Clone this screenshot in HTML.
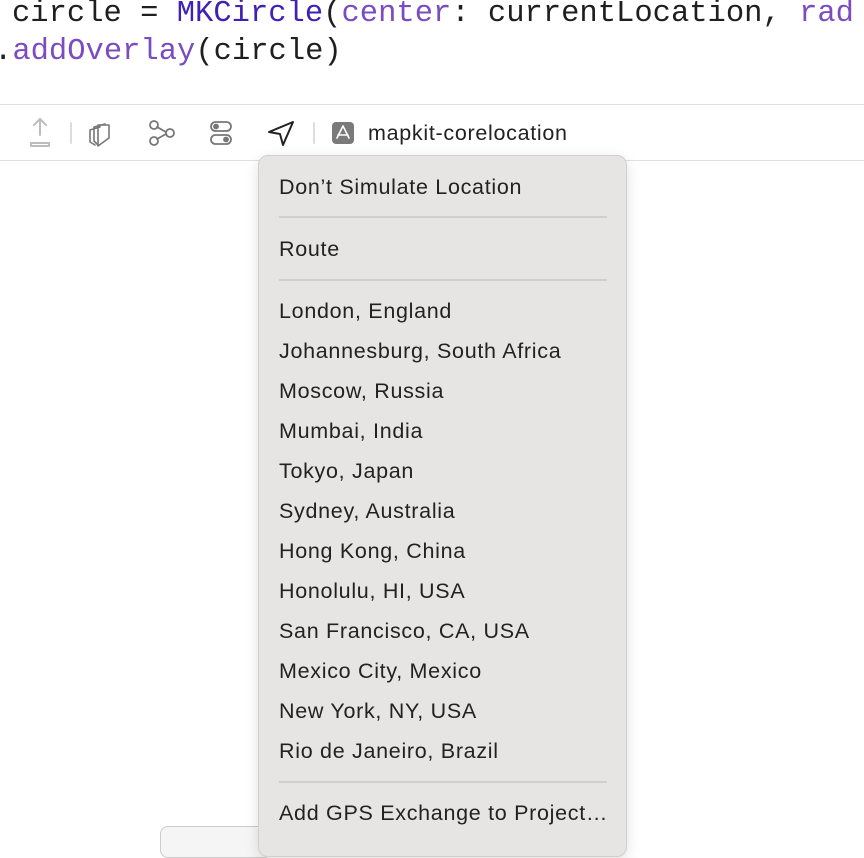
<!DOCTYPE html><html><head><style>
body{margin:0;width:864px;height:840px;overflow:hidden;background:#fff;position:relative;font-family:"Liberation Sans",sans-serif}
.code{position:absolute;left:0;font-family:"Liberation Mono",monospace;font-size:30.5px;color:#1f1f1f;white-space:pre;line-height:38px}
.k{color:#3f22b4}.p{color:#7b4cc0}
.hl{position:absolute;left:0;width:864px;height:1px;background:#e0e0e0}
.menu{position:absolute;left:258px;top:155px;width:367px;height:700px;background:#e6e5e4;border:1px solid #cfcfcf;border-radius:10px;box-shadow:0 4px 14px rgba(0,0,0,.12)}
.it{position:absolute;left:20px;font-size:21.5px;letter-spacing:0.7px;color:#222;line-height:24px;white-space:nowrap}
.sep{position:absolute;left:20px;width:328px;height:2px;background:#d0cfce}
</style></head><body>
<div class="code" style="top:-5px;left:12px">circle = <span class="k">MKCircle</span>(<span class="p">center</span>: currentLocation, <span class="p">rad</span></div>
<div class="code" style="top:33px;left:-6px">.<span class="p">addOverlay</span>(circle)</div>
<div class="hl" style="top:104px"></div>
<div class="hl" style="top:160px"></div>
<svg width="360" height="40" style="position:absolute;left:20px;top:113px" fill="none" stroke-linecap="round" stroke-linejoin="round">
<g stroke="#bdbdbd" stroke-width="2"><path d="M20 6v16M14 12l6-6 6 6M11 30h18"/><path d="M11 30v3h18v-3"/></g>
<line x1="51" y1="10" x2="51" y2="30" stroke="#ddd" stroke-width="2"/>
<g stroke="#777" stroke-width="1.6"><path d="M78 12h11v13l-11 8z"/><path d="M74 14l11-3M74 14v14l4 4M70 17l10-3M70 17v12l5 3"/></g>
<g stroke="#777" stroke-width="1.8"><circle cx="134" cy="12" r="4"/><circle cx="134" cy="28" r="4"/><circle cx="150" cy="20" r="4"/><path d="M137 14l9 5M137 26l9-5"/></g>
<g stroke="#777" stroke-width="1.8"><rect x="191" y="9" width="20" height="9" rx="4.5"/><rect x="191" y="22" width="20" height="9" rx="4.5"/><circle cx="196" cy="13.5" r="2" fill="#777"/><circle cx="206" cy="26.5" r="2" fill="#777"/></g>
<path d="M273 9l-24 10 11 2 3 11z" stroke="#222" stroke-width="2"/>
<line x1="294" y1="10" x2="294" y2="30" stroke="#ddd" stroke-width="2"/>
<rect x="312" y="9" width="22" height="22" rx="4" fill="#7a7a7a"/><path d="M323 13l-6 12M323 13l6 12M318 22h10" stroke="#fff" stroke-width="1.6"/>
</svg>
<div style="position:absolute;left:368px;top:121px;font-size:21.5px;letter-spacing:0.7px;color:#222">mapkit-corelocation</div>
<div style="position:absolute;left:160px;top:826px;width:110px;height:30px;border:1px solid #ccc;border-radius:8px;background:#f5f5f5"></div>
<div class="menu">
<div class="it" style="top:19px">Don’t Simulate Location</div>
<div class="sep" style="top:60px"></div>
<div class="it" style="top:81px">Route</div>
<div class="sep" style="top:123px"></div>
<div class="it" style="top:143px">London, England</div>
<div class="it" style="top:183px">Johannesburg, South Africa</div>
<div class="it" style="top:223px">Moscow, Russia</div>
<div class="it" style="top:263px">Mumbai, India</div>
<div class="it" style="top:303px">Tokyo, Japan</div>
<div class="it" style="top:343px">Sydney, Australia</div>
<div class="it" style="top:383px">Hong Kong, China</div>
<div class="it" style="top:423px">Honolulu, HI, USA</div>
<div class="it" style="top:463px">San Francisco, CA, USA</div>
<div class="it" style="top:503px">Mexico City, Mexico</div>
<div class="it" style="top:543px">New York, NY, USA</div>
<div class="it" style="top:583px">Rio de Janeiro, Brazil</div>
<div class="sep" style="top:625px"></div>
<div class="it" style="top:645px">Add GPS Exchange to Project…</div>
</div>
</body></html>
